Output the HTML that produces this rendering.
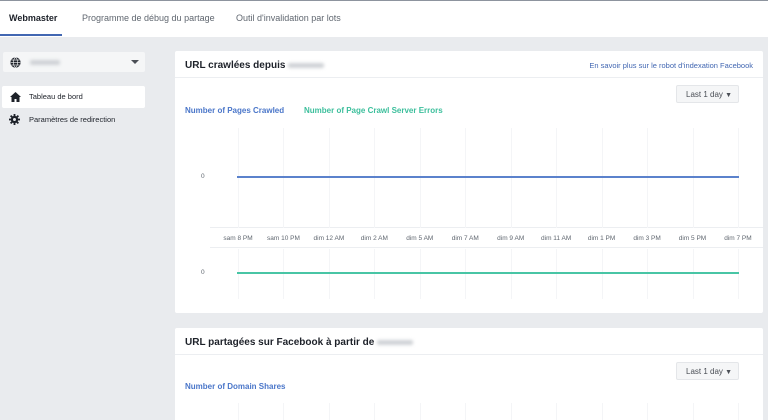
<!DOCTYPE html>
<html><head><meta charset="utf-8"><style>
*{margin:0;padding:0;box-sizing:border-box}
html,body{width:768px;height:420px;overflow:hidden}
body{background:#e9ebee;font-family:"Liberation Sans",sans-serif;position:relative;color:#1d2129}
.top{position:absolute;left:0;top:0;width:768px;height:37px;background:#fff;border-top:1px solid #8d949e}
.tab{position:absolute;top:12px;font-size:9px;color:#606770}
.abs{position:absolute}
.blur{display:inline-block;background:#cfd2d6;filter:blur(1.5px);height:5px;border-radius:2px;vertical-align:middle}
.card{position:absolute;left:175px;width:588px;background:#fff;border-radius:2px}
.hdr{height:27px;border-bottom:1px solid #eceef1;font-size:10px;font-weight:bold;padding:9px 0 0 10px;color:#1d2129}
.btn{position:absolute;left:501px;width:63px;height:18px;background:#f5f6f7;border:1px solid #e4e6e9;border-radius:2px;font-size:8px;color:#4b4f56;padding:4px 0 0 9px}
.vl{position:absolute;width:1px;background:#f4f5f7}
.lbl{position:absolute;font-size:6.5px;color:#606770;width:46px;text-align:center}
</style></head><body>
<div class="top">
<div class="tab" style="left:9px;color:#1d2129;font-weight:bold">Webmaster</div>
<div class="tab" style="left:82px">Programme de débug du partage</div>
<div class="tab" style="left:236px">Outil d'invalidation par lots</div>
<div class="abs" style="left:0;top:33px;width:62px;height:2px;background:#4267b2"></div>
</div>
<div class="abs" style="left:3px;top:52px;width:142px;height:20px;background:#f5f6f7;border-radius:2px">
<svg class="abs" style="left:7px;top:5px" width="11" height="11" viewBox="0 0 12 12"><circle cx="6" cy="6" r="5.6" fill="#1d2129"/><g stroke="#f5f6f7" stroke-width=".7" fill="none"><ellipse cx="6" cy="6" rx="2.2" ry="5.3"/><line x1=".7" y1="6" x2="11.3" y2="6"/><line x1="1.5" y1="3.3" x2="10.5" y2="3.3"/><line x1="1.5" y1="8.7" x2="10.5" y2="8.7"/></g></svg>
<span class="blur abs" style="left:27px;top:8px;width:30px"></span>
<div class="abs" style="left:128px;top:8px;border-left:4px solid transparent;border-right:4px solid transparent;border-top:4px solid #4b4f56"></div>
</div>
<div class="abs" style="left:2px;top:86px;width:143px;height:22px;background:#fff;border-radius:2px">
<svg class="abs" style="left:8px;top:6px" width="11" height="10" viewBox="0 0 11 10"><path d="M5.5 0L0 5h1.5v5h3V7h2v3h3V5H11z" fill="#1d2129"/></svg>
<div class="abs" style="left:27px;top:6px;font-size:7.5px">Tableau de bord</div>
</div>
<svg class="abs" style="left:9px;top:114px" width="11" height="11" viewBox="0 0 12 12"><g fill="#1d2129"><circle cx="6" cy="6" r="4"/><rect x="5" y="0" width="2" height="12"/><rect x="0" y="5" width="12" height="2"/><rect x="5" y="0" width="2" height="12" transform="rotate(45 6 6)"/><rect x="5" y="0" width="2" height="12" transform="rotate(-45 6 6)"/></g><circle cx="6" cy="6" r="1.6" fill="#e9ebee"/></svg>
<div class="abs" style="left:29px;top:115px;font-size:7.5px">Paramètres de redirection</div>

<div class="card" style="top:51px;height:262px">
<div class="hdr">URL crawlées depuis <span class="blur" style="width:36px"></span></div>
<div class="abs" style="right:10px;top:10px;font-size:7.5px;color:#4267b2">En savoir plus sur le robot d'indexation Facebook</div>
<div class="btn" style="top:34px">Last 1 day <span style="font-size:7px">▼</span></div>
<div class="abs" style="left:10px;top:55px;font-size:8px;font-weight:bold;color:#4a76c9">Number of Pages Crawled</div>
<div class="abs" style="left:129px;top:55px;font-size:8px;font-weight:bold;color:#3cbf9c">Number of Page Crawl Server Errors</div>
<div class="abs" style="left:26px;top:122px;font-size:6.5px;color:#606770">0</div>
<div class="abs" style="left:62px;top:125px;width:502px;height:2px;background:#5b82cc"></div>
<div class="abs" style="left:35px;top:176px;width:553px;height:1px;background:#eceef1"></div>
<div class="abs" style="left:35px;top:196px;width:553px;height:1px;background:#eceef1"></div>
<div class="abs" style="left:26px;top:218px;font-size:6.5px;color:#606770">0</div>
<div class="abs" style="left:62px;top:221px;width:502px;height:2px;background:#48c5a5"></div>
</div>

<div class="card" style="top:328px;height:100px">
<div class="hdr">URL partagées sur Facebook à partir de <span class="blur" style="width:36px"></span></div>
<div class="btn" style="top:34px">Last 1 day <span style="font-size:7px">▼</span></div>
<div class="abs" style="left:10px;top:54px;font-size:8px;font-weight:bold;color:#4a76c9">Number of Domain Shares</div>
</div>

<div id="grid"></div>
<script>
var h='',labels=['sam 8 PM','sam 10 PM','dim 12 AM','dim 2 AM','dim 5 AM','dim 7 AM','dim 9 AM','dim 11 AM','dim 1 PM','dim 3 PM','dim 5 PM','dim 7 PM'];
for(var i=0;i<12;i++){var x=238+i*45.45;
h+='<div class="vl" style="left:'+x+'px;top:128px;height:48px"></div>';
h+='<div class="vl" style="left:'+x+'px;top:178px;height:50px"></div>';
h+='<div class="vl" style="left:'+x+'px;top:249px;height:23px"></div>';
h+='<div class="vl" style="left:'+x+'px;top:274px;height:25px"></div>';
h+='<div class="vl" style="left:'+x+'px;top:403px;height:20px"></div>';
h+='<div class="lbl" style="left:'+(x-23)+'px;top:235px">'+labels[i]+'</div>';}
document.getElementById('grid').innerHTML=h;
</script>
</body></html>
